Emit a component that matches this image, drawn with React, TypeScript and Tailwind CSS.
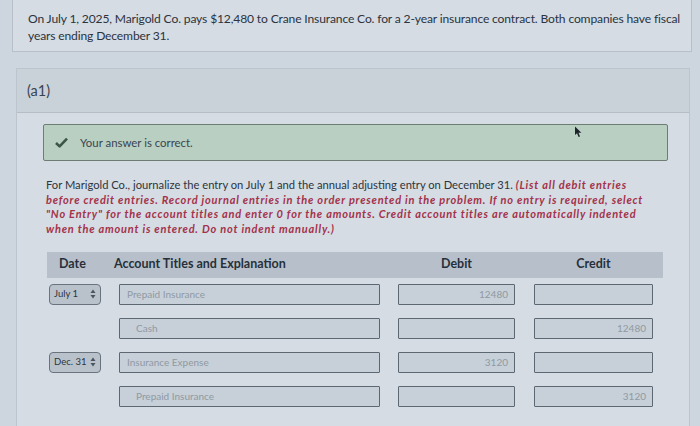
import React from 'react';

const rows = [
  { date: 'July 1', account: 'Prepaid Insurance', indent: false, debit: '12480', credit: '' },
  { date: '', account: 'Cash', indent: true, debit: '', credit: '12480' },
  { date: 'Dec. 31', account: 'Insurance Expense', indent: false, debit: '3120', credit: '' },
  { date: '', account: 'Prepaid Insurance', indent: true, debit: '', credit: '3120' },
];

function Stepper() {
  return (
    <svg width="6" height="10" viewBox="0 0 6 10" className="shrink-0">
      <path d="M3 0.5 L5.5 4 H0.5 Z" fill="#4a5560" />
      <path d="M3 9.5 L5.5 6 H0.5 Z" fill="#4a5560" />
    </svg>
  );
}

export default function App() {
  return (
    <div
      className="relative h-[426px] w-[700px] overflow-hidden bg-[#cdd5de] text-[#2e3742]"
      style={{ fontFamily: 'Lato, "Open Sans", sans-serif' }}
    >
      {/* problem statement */}
      <div className="ml-[12px] h-[52px] w-[680px] whitespace-nowrap border-x border-b border-[#b7bfc8] bg-[#d5dce4] px-[15px] pt-[10px] text-[12.1px] leading-[17px] tracking-[-0.15px] text-[#2b333d]">
        On July 1, 2025, Marigold Co. pays $12,480 to Crane Insurance Co. for a 2-year insurance contract. Both companies have fiscal
        <br />
        years ending December 31.
      </div>

      {/* part a1 */}
      <div className="ml-[16px] mt-[16px] w-[674px] border border-[#bcc4cd]">
        <div className="flex h-[44px] items-center border-b border-[#b5bdc6] bg-[#c9d1d9] pl-[10px] text-[14.5px] text-[#3a4450]">
          (a1)
        </div>

        <div className="h-[400px] bg-[#d5dce4] pl-[26px] pt-[11px]">
          <div className="flex h-[37px] w-[625px] items-center rounded-[2px] border border-[#6e7d74] bg-[#b8cfc1] pl-[11px]">
            <svg width="13" height="11" viewBox="0 0 13 11" className="shrink-0">
              <path d="M1 6 L4.6 9.4 L12 1.6" fill="none" stroke="#3b5646" strokeWidth="2.6" strokeLinejoin="round" />
            </svg>
            <span className="ml-[12px] text-[11.4px] text-[#3a4551]">Your answer is correct.</span>
          </div>

          <p className="mt-[17px] whitespace-nowrap pl-[3px] text-[11.2px] leading-[14.7px] text-[#2c3540]">
            For Marigold Co., journalize the entry on July 1 and the annual adjusting entry on December 31.{' '}
            <span className="text-[11px] font-bold italic tracking-[0.78px] text-[#a3324a]">
              (List all debit entries
              <br />
              before credit entries. Record journal entries in the order presented in the problem. If no entry is required, select
              <br />
              "No Entry" for the account titles and enter 0 for the amounts. Credit account titles are automatically indented
              <br />
              when the amount is entered. Do not indent manually.)
            </span>
          </p>

          {/* journal table */}
          <div className="ml-[4px] mt-[15px] w-[616px]">
            <div className="flex h-[26px] items-center bg-[#b7c0ca] text-[12.5px] font-bold text-[#27303a]">
              <div className="w-[67px] pl-[12px]">Date</div>
              <div className="w-[284px]">Account Titles and Explanation</div>
              <div className="w-[117px] text-center">Debit</div>
              <div className="ml-[19px] w-[119px] text-center">Credit</div>
            </div>

            <div className="flex flex-col gap-[13px] pt-[6px]">
              {rows.map((r, i) => (
                <div key={i} className="flex h-[21px] items-center">
                  <div className="w-[72px] pl-[2px]">
                    {r.date && (
                      <div className="flex h-[21px] w-[52px] items-center justify-between rounded-[4px] border border-[#6a737d] bg-[#b9c2cb] px-[4px] text-[9.5px] text-[#2c3540]">
                        <span>{r.date}</span>
                        <Stepper />
                      </div>
                    )}
                  </div>
                  <div
                    className={`flex h-[21px] w-[261px] items-center rounded-[1px] border border-[#5d6772] bg-[#c7d0d8] text-[10px] text-[#8f99a3] ${
                      r.indent ? 'pl-[16px]' : 'pl-[7px]'
                    }`}
                  >
                    {r.account}
                  </div>
                  <div className="ml-[18px] flex h-[21px] w-[117px] items-center justify-end rounded-[1px] border border-[#5d6772] bg-[#c7d0d8] pr-[6px] text-[10px] text-[#8f99a3]">
                    {r.debit}
                  </div>
                  <div className="ml-[19px] flex h-[21px] w-[119px] items-center justify-end rounded-[1px] border border-[#5d6772] bg-[#c7d0d8] pr-[6px] text-[10px] text-[#8f99a3]">
                    {r.credit}
                  </div>
                </div>
              ))}
            </div>
          </div>
        </div>
      </div>

      {/* mouse pointer captured in the photo */}
      <svg width="9" height="12" viewBox="0 0 9 12" className="absolute left-[574px] top-[126px]">
        <path d="M1 0.5 L1 9 L3 7.2 L4.6 11 L6 10.4 L4.5 6.8 L7.4 6.8 Z" fill="#1e242b" />
      </svg>
    </div>
  );
}
